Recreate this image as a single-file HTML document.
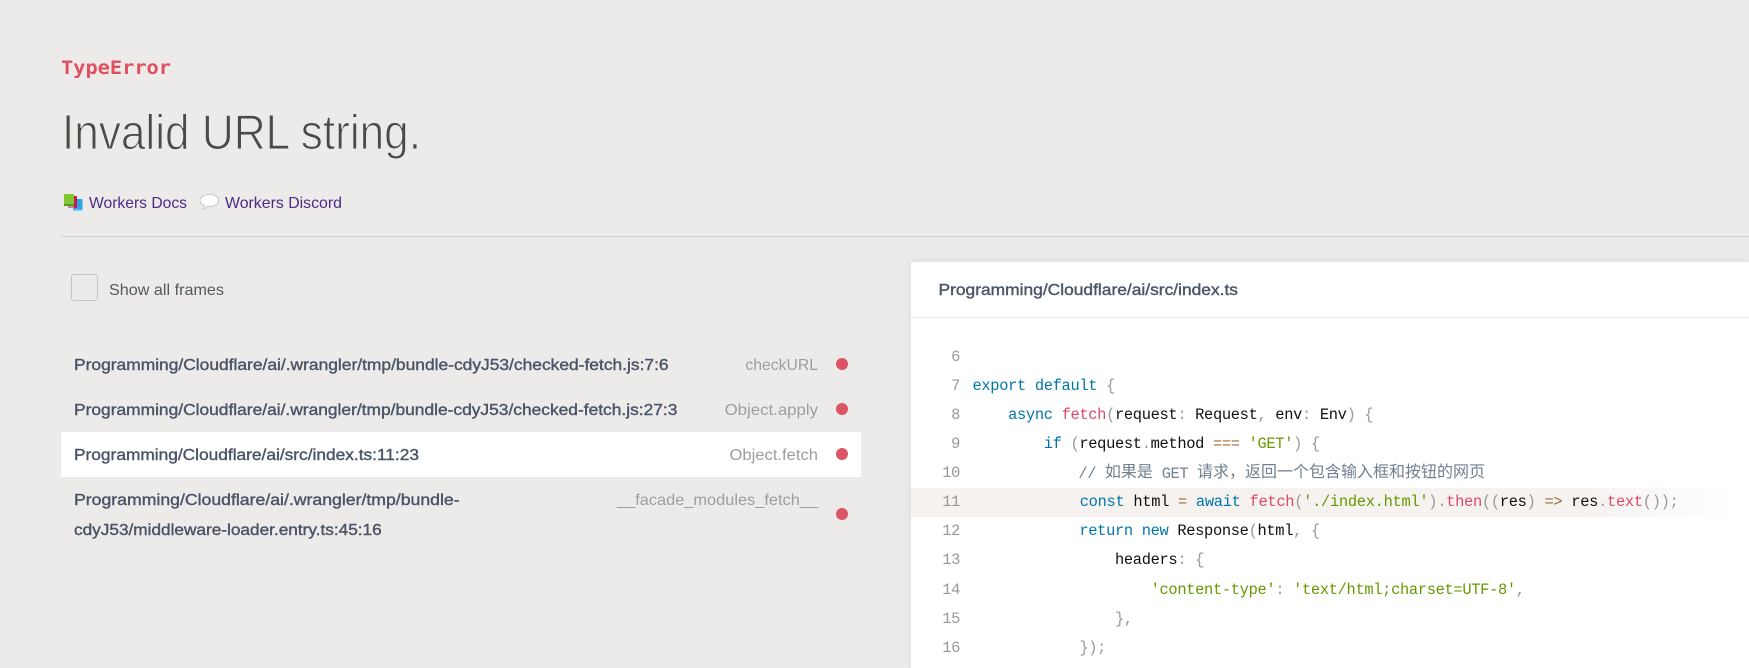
<!DOCTYPE html>
<html lang="en"><head><meta charset="utf-8"><title>TypeError</title>
<style>
html,body{margin:0;padding:0;width:1749px;height:668px;overflow:hidden;background:#edebe9}
body{position:relative;font-family:"Liberation Sans",sans-serif}
svg.t{position:absolute;left:0;top:0}
.panel{position:absolute;left:911px;top:262px;width:838px;height:406px;background:#fff;box-shadow:0 0 8px rgba(0,0,0,.07)}
.row{position:absolute;left:61px;top:432px;width:800px;height:45px;background:#fff}
.hl{position:absolute;left:911px;top:488px;width:838px;height:29px;background:linear-gradient(90deg,#f5f2f0 0,#f5f2f0 80%,#fff 98%)}
.rule{position:absolute;left:61px;top:236px;width:1688px;height:1px;background:#d0cfcd}
.hr2{position:absolute;left:911px;top:317px;width:838px;height:1px;background:#eeeeee}
.cb{position:absolute;left:71px;top:274px;width:25px;height:25px;border:1px solid #c6c5c3;border-radius:3px}
.dot{position:absolute;left:836px;width:12px;height:12px;border-radius:50%;background:#db5565}
.n,.c{position:absolute;font-family:"Liberation Mono",monospace;font-size:15.4px;letter-spacing:-.33px;line-height:20px;white-space:pre;height:20px}
.n{left:900px;width:60px;text-align:right;color:#999}
.c{left:972.5px;color:#111}
.k{color:#0077aa}.f{color:#dd4a68}.s{color:#669900}.o{color:#9a6e3a}.p{color:#999}.m{color:#708090}
.z{font-family:"Noto Sans CJK SC",sans-serif;font-size:16px;letter-spacing:0;line-height:16px;position:relative;top:-1px}
</style></head><body>
<div class="panel"></div>
<div class="row"></div>
<div class="hl"></div>
<div class="rule"></div>
<div class="hr2"></div>
<div class="cb"></div>
<div class="dot" style="top:358px"></div>
<div class="dot" style="top:403px"></div>
<div class="dot" style="top:448px"></div>
<div class="dot" style="top:508px"></div>

<svg class="t" width="1749" height="668" viewBox="0 0 1749 668">
<g font-family="Liberation Sans, sans-serif">
<text x="61" y="74" font-family="DejaVu Sans Mono, monospace" font-weight="700" font-size="19" fill="#e0505f" textLength="110" lengthAdjust="spacingAndGlyphs">TypeError</text>
<text x="62" y="149" font-size="49" fill="#4a4a48" stroke="#edebe9" stroke-width="1.1" textLength="359" lengthAdjust="spacingAndGlyphs">Invalid URL string.</text>
<text x="89" y="208" font-size="16" fill="#4b2a86" textLength="98" lengthAdjust="spacingAndGlyphs">Workers Docs</text>
<text x="225" y="208" font-size="16" fill="#4b2a86" textLength="117" lengthAdjust="spacingAndGlyphs">Workers Discord</text>
<text x="109" y="295" font-size="16" fill="#55595c" textLength="115" lengthAdjust="spacingAndGlyphs">Show all frames</text>

<g font-size="16" fill="#4a5568" stroke="#4a5568" stroke-width=".4">
<text x="74" y="370" textLength="594.6" lengthAdjust="spacingAndGlyphs">Programming/Cloudflare/ai/.wrangler/tmp/bundle-cdyJ53/checked-fetch.js:7:6</text>
<text x="74" y="415" textLength="603.4" lengthAdjust="spacingAndGlyphs">Programming/Cloudflare/ai/.wrangler/tmp/bundle-cdyJ53/checked-fetch.js:27:3</text>
<text x="74" y="460" textLength="345" lengthAdjust="spacingAndGlyphs">Programming/Cloudflare/ai/src/index.ts:11:23</text>
<text x="74" y="505" textLength="385.6" lengthAdjust="spacingAndGlyphs">Programming/Cloudflare/ai/.wrangler/tmp/bundle-</text>
<text x="74" y="535" textLength="307.7" lengthAdjust="spacingAndGlyphs">cdyJ53/middleware-loader.entry.ts:45:16</text>
<text x="938.5" y="295" textLength="299.5" lengthAdjust="spacingAndGlyphs">Programming/Cloudflare/ai/src/index.ts</text>
</g>
<g font-size="16" fill="#a09e9c">
<text x="745.4" y="370" textLength="72.6" lengthAdjust="spacingAndGlyphs">checkURL</text>
<text x="724.6" y="415" textLength="93.4" lengthAdjust="spacingAndGlyphs">Object.apply</text>
<text x="729.5" y="460" textLength="88.5" lengthAdjust="spacingAndGlyphs">Object.fetch</text>
<text x="617" y="505" textLength="201" lengthAdjust="spacingAndGlyphs">__facade_modules_fetch__</text>
</g>
</g>
<!-- books icon -->
<g>
<rect x="73" y="199" width="9.5" height="12" rx="1" fill="#2aa6e8"/>
<rect x="73" y="209.5" width="9.5" height="1.5" fill="#8fcbea"/>
<rect x="68" y="196" width="9" height="12" rx="1" fill="#c9184f"/>
<rect x="68" y="206" width="6" height="2" fill="#b98a9c"/>
<rect x="64" y="194" width="10" height="11.5" rx="1" fill="#7fc832"/>
<rect x="64" y="204" width="10" height="2" fill="#5b9a2c"/>
</g>
<!-- speech balloon icon -->
<path d="M209.500 194.500c5.200 0 9 2.600 9 6s-3.800 6-9 6c-.7 0-1.400-.05-2.100-.15-.8 1.300-2 2.400-3.600 2.650.6-1 .9-2.100.9-3.300-2.800-1-4.700-3-4.700-5.200 0-3.400 4.200-6 9.500-6z" fill="#fff" stroke="#bdbbb9" stroke-width=".8"/>
</svg>

<div class="n" style="top:347px">6</div>
<div class="n" style="top:376px">7</div>
<div class="c" style="top:376px"><span class="k">export</span> <span class="k">default</span> <span class="p">{</span></div>
<div class="n" style="top:405px">8</div>
<div class="c" style="top:405px">    <span class="k">async</span> <span class="f">fetch</span><span class="p">(</span>request<span class="p">:</span> Request<span class="p">,</span> env<span class="p">:</span> Env<span class="p">)</span> <span class="p">{</span></div>
<div class="n" style="top:434px">9</div>
<div class="c" style="top:434px">        <span class="k">if</span> <span class="p">(</span>request<span class="p">.</span>method <span class="o">===</span> <span class="s">'GET'</span><span class="p">)</span> <span class="p">{</span></div>
<div class="n" style="top:463px">10</div>
<div class="c m" style="top:463px;letter-spacing:-.41px">            // <span class="z">如果是</span> GET <span class="z">请求，返回一个包含输入框和按钮的网页</span></div>
<div class="n" style="top:492px">11</div>
<div class="c" style="top:492px;letter-spacing:-.30px">            <span class="k">const</span> html <span class="o">=</span> <span class="k">await</span> <span class="f">fetch</span><span class="p">(</span><span class="s">'./index.html'</span><span class="p">).</span><span class="f">then</span><span class="p">((</span>res<span class="p">)</span> <span class="o">=&gt;</span> res<span class="p">.</span><span class="f">text</span><span class="p">());</span></div>
<div class="n" style="top:521px">12</div>
<div class="c" style="top:521px">            <span class="k">return</span> <span class="k">new</span> Response<span class="p">(</span>html<span class="p">,</span> <span class="p">{</span></div>
<div class="n" style="top:550px">13</div>
<div class="c" style="top:550px">                headers<span class="p">:</span> <span class="p">{</span></div>
<div class="n" style="top:580px">14</div>
<div class="c" style="top:580px">                    <span class="s">'content-type'</span><span class="p">:</span> <span class="s">'text/html;charset=UTF-8'</span><span class="p">,</span></div>
<div class="n" style="top:609px">15</div>
<div class="c" style="top:609px">                <span class="p">},</span></div>
<div class="n" style="top:638px">16</div>
<div class="c" style="top:638px">            <span class="p">});</span></div>
</body></html>
